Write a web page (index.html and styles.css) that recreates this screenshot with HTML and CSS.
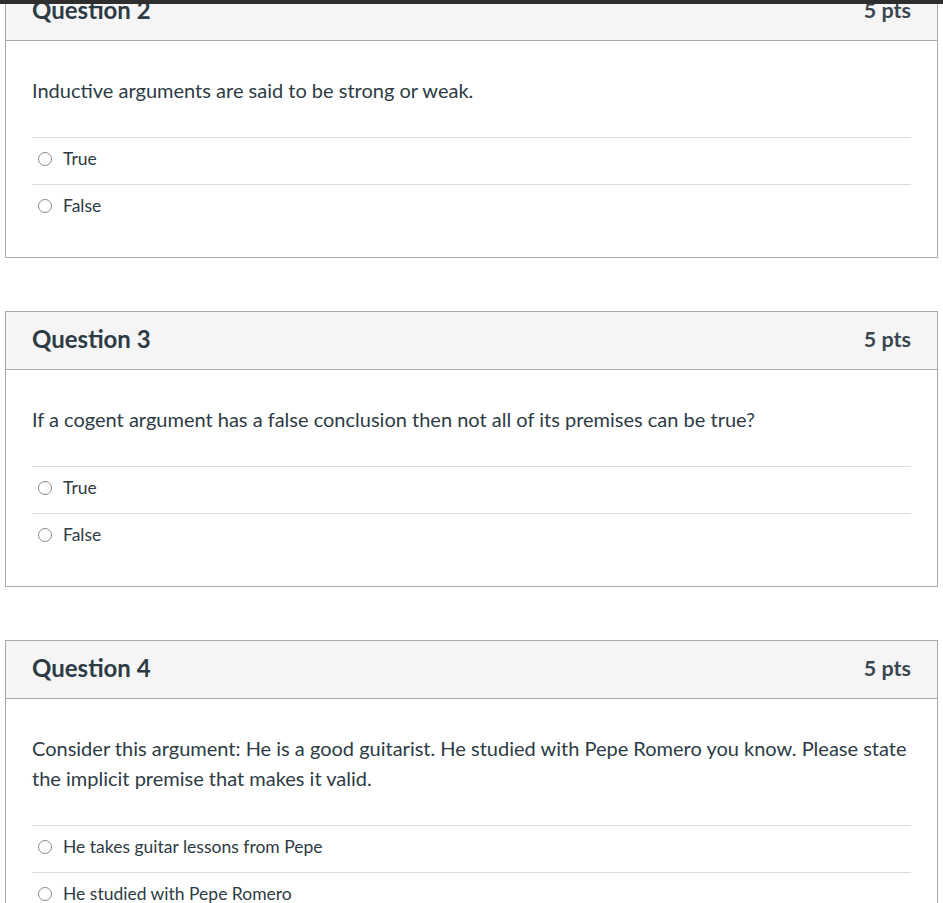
FILE: index.html
```html
<!DOCTYPE html>
<html>
<head>
<meta charset="utf-8">
<link rel="stylesheet" href="styles.css">
</head>
<body>
<div class="topbar"></div>
<main class="quiz">
  <section class="question">
    <header class="q-header"><h2 class="q-title">Question 2</h2><span class="q-pts">5 pts</span></header>
    <div class="q-body">
      <p class="q-text">Inductive arguments are said to be strong or weak.</p>
      <div class="answers">
        <label class="answer"><span class="radio"></span><span class="a-text">True</span></label>
        <label class="answer"><span class="radio"></span><span class="a-text">False</span></label>
      </div>
    </div>
  </section>
  <section class="question">
    <header class="q-header"><h2 class="q-title">Question 3</h2><span class="q-pts">5 pts</span></header>
    <div class="q-body">
      <p class="q-text">If a cogent argument has a false conclusion then not all of its premises can be true?</p>
      <div class="answers">
        <label class="answer"><span class="radio"></span><span class="a-text">True</span></label>
        <label class="answer"><span class="radio"></span><span class="a-text">False</span></label>
      </div>
    </div>
  </section>
  <section class="question">
    <header class="q-header"><h2 class="q-title">Question 4</h2><span class="q-pts">5 pts</span></header>
    <div class="q-body">
      <p class="q-text">Consider this argument: He is a good guitarist. He studied with Pepe Romero you know. Please state the implicit premise that makes it valid.</p>
      <div class="answers">
        <label class="answer"><span class="radio"></span><span class="a-text">He takes guitar lessons from Pepe</span></label>
        <label class="answer"><span class="radio"></span><span class="a-text">He studied with Pepe Romero</span></label>
      </div>
    </div>
  </section>
</main>
</body>
</html>
```
FILE: styles.css
```css
html, body {
  margin: 0;
  padding: 0;
  background: #fff;
  font-family: Lato, "Noto Sans", sans-serif;
  color: #2d3b45;
  overflow: hidden;
}
.topbar {
  position: fixed;
  top: 0;
  left: 0;
  right: 0;
  height: 4px;
  background: #2e2e2e;
  z-index: 10;
}
.quiz {
  display: flex;
  flex-direction: column;
  gap: 53px;
  margin: -18px 5px 0 5px;
}
.question {
  border: 1px solid #aaaaaa;
  background: #fff;
}
.q-header {
  display: flex;
  justify-content: space-between;
  align-items: center;
  box-sizing: border-box;
  height: 58px;
  padding: 0 26px 3px 26px;
  background: #f5f5f5;
  border-bottom: 1px solid #aaaaaa;
}
.q-title {
  margin: 0;
  font-size: 24px;
  font-weight: 700;
  line-height: 30px;
  color: #2d3b45;
}
.q-pts {
  font-size: 21.5px;
  font-weight: 700;
  line-height: 30px;
  color: #3a4750;
}
.q-body {
  padding: 34px 26px 26px 26px;
}
.q-text {
  margin: 0 0 32px 0;
  font-size: 20px;
  line-height: 30px;
}
.answers {
  display: flex;
  flex-direction: column;
}
.answer {
  display: flex;
  align-items: center;
  gap: 11px;
  box-sizing: border-box;
  height: 47px;
  border-top: 1px solid #dcdcdc;
  padding: 0 6px 4px 6px;
  font-size: 17.5px;
}
.radio {
  width: 12px;
  height: 12px;
  border: 1px solid #8b8b8b;
  border-radius: 50%;
  flex: none;
}
.a-text {
  line-height: 22px;
}
```
